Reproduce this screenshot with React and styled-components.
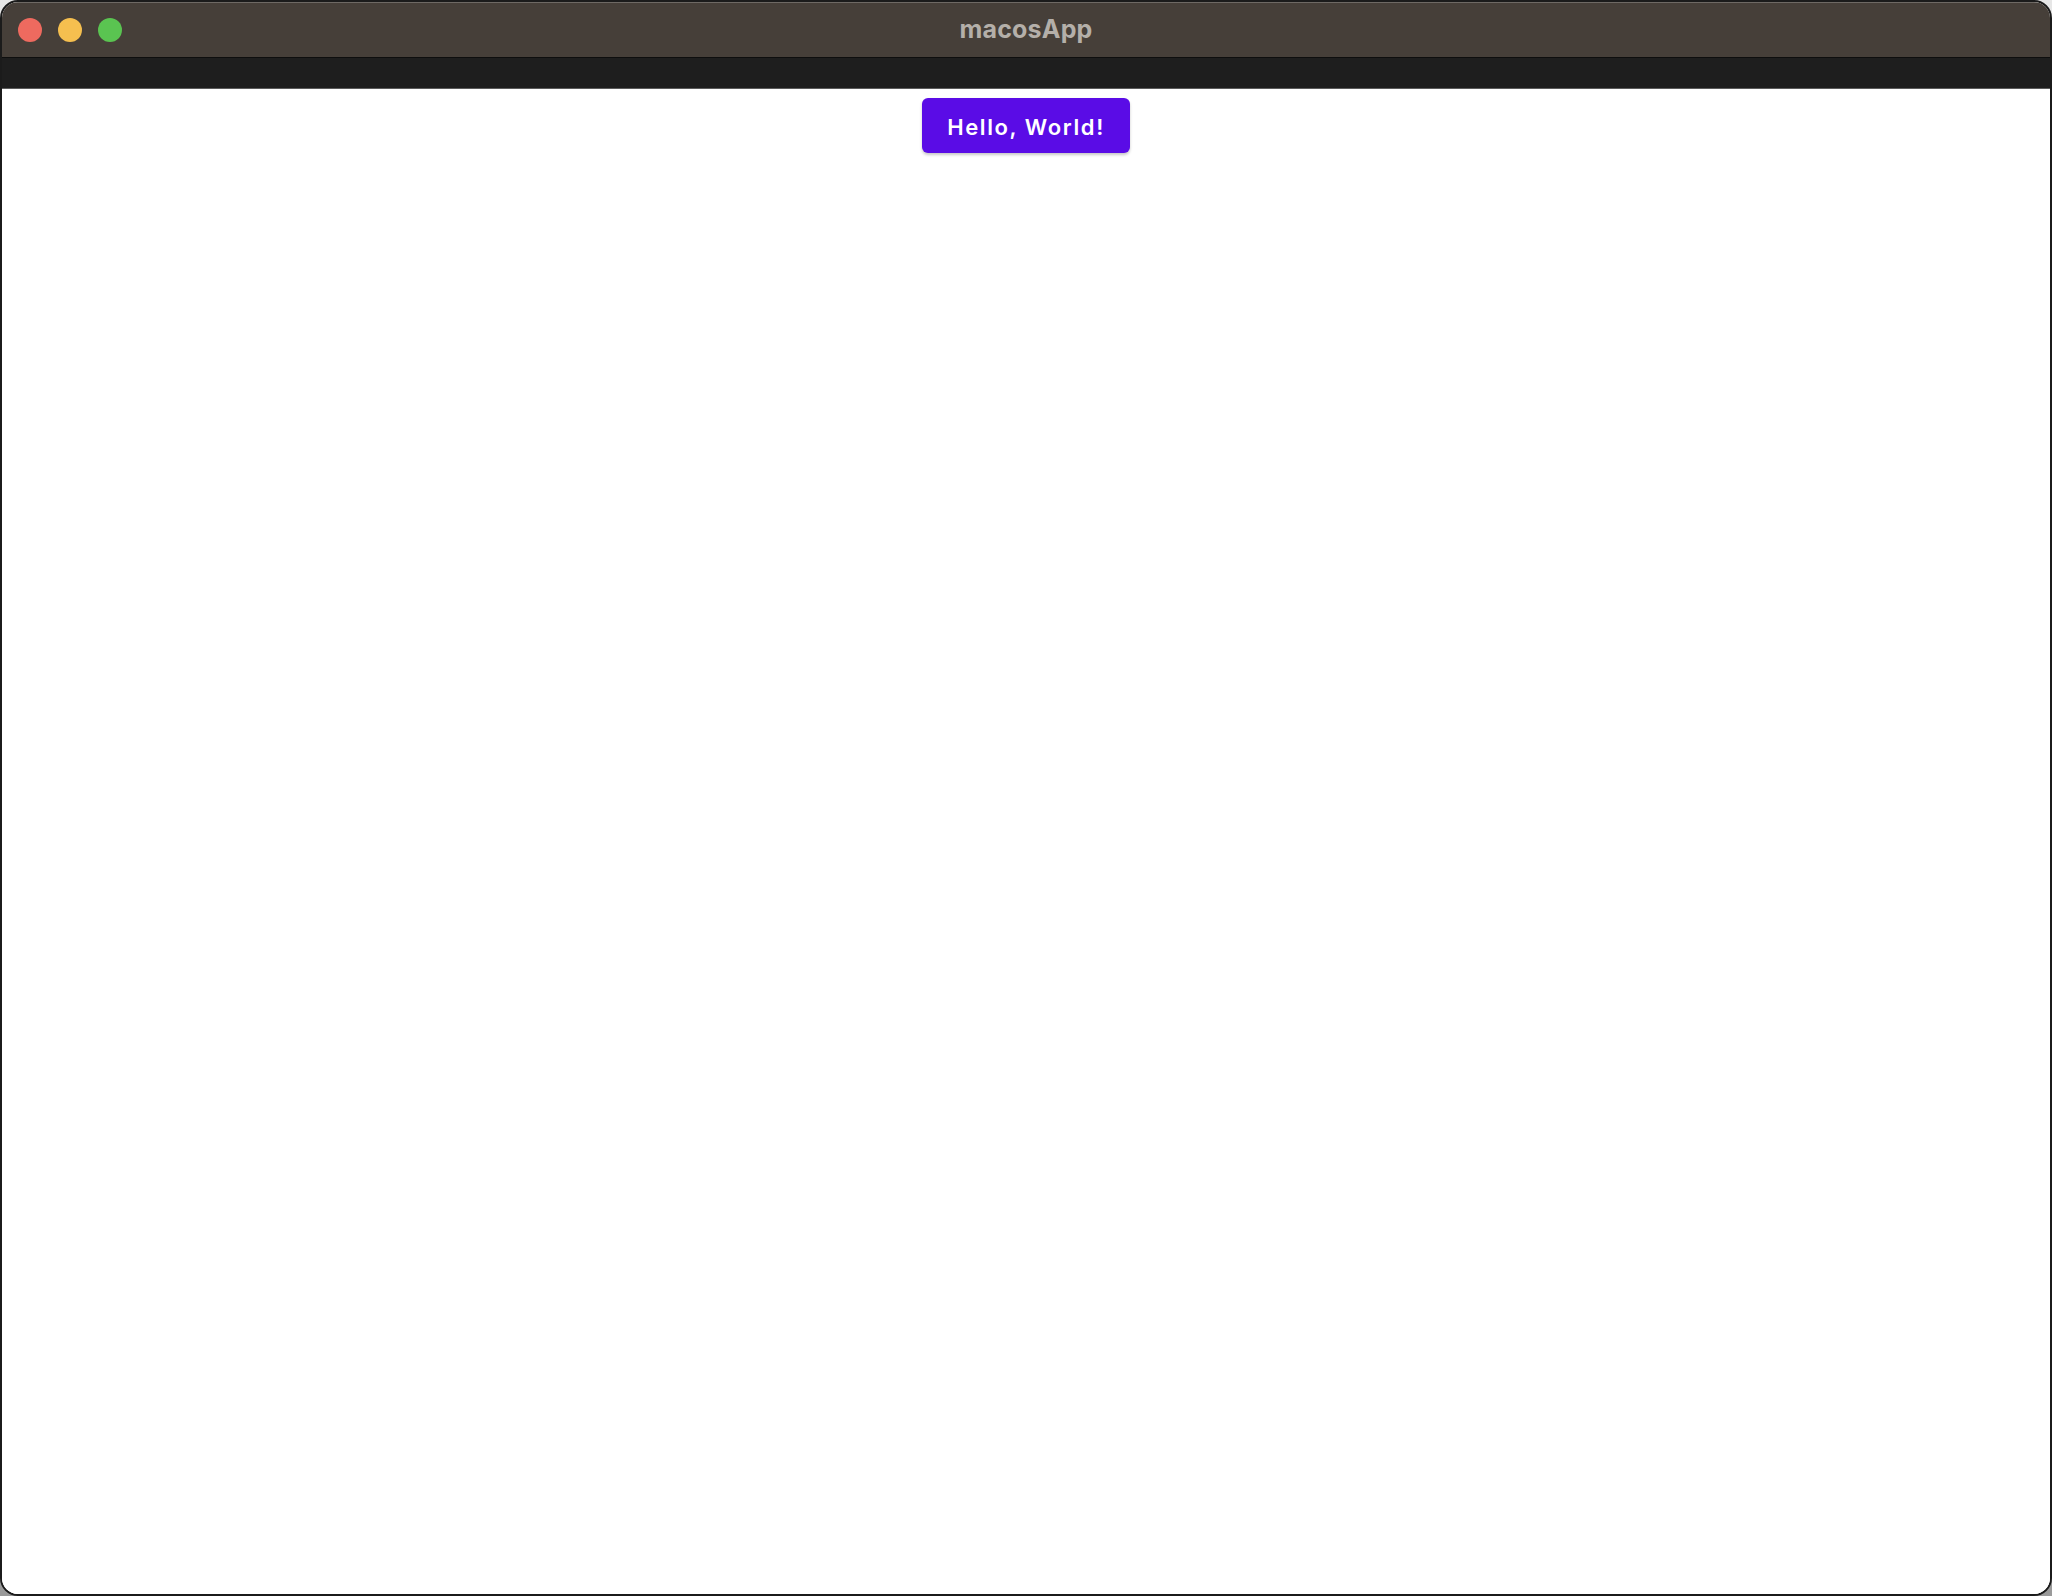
import React from "react";
import styled, { createGlobalStyle } from "styled-components";

const Global = createGlobalStyle`
  html, body {
    margin: 0;
    padding: 0;
    height: 100%;
  }
  body {
    background: linear-gradient(180deg, #e6e6e6 0%, #9a9a9a 100%);
    font-family: Inter, "Liberation Sans", sans-serif;
  }
  #root {
    height: 100%;
  }
`;

const Window = styled.div`
  box-sizing: border-box;
  height: 100vh;
  display: flex;
  flex-direction: column;
  border: 2px solid #1b1b1b;
  border-radius: 18px;
  overflow: hidden;
  background: #ffffff;
`;

const TitleBar = styled.div`
  box-sizing: border-box;
  height: 56px;
  flex: none;
  display: grid;
  grid-template-columns: 1fr auto 1fr;
  align-items: center;
  padding: 0 16px;
  background: #463f39;
  box-shadow: inset 0 1px 0 rgba(255, 255, 255, 0.22);
  border-bottom: 1px solid #0e0e0e;
`;

const Lights = styled.div`
  display: flex;
  gap: 16px;
  align-items: center;
`;

const Light = styled.span`
  width: 24px;
  height: 24px;
  border-radius: 50%;
  background: ${(p) => p.$color};
`;

const Title = styled.div`
  font-family: Inter, "Liberation Sans", sans-serif;
  font-weight: 700;
  font-size: 25px;
  color: #b4afa9;
  letter-spacing: 0.2px;
  padding-bottom: 2px;
`;

const Toolbar = styled.div`
  box-sizing: border-box;
  height: 31px;
  flex: none;
  background: #1e1e1e;
  border-bottom: 1px solid #5c5c5c;
`;

const Content = styled.div`
  flex: 1;
  display: flex;
  flex-direction: column;
  align-items: center;
  padding-top: 9px;
  background: #ffffff;
`;

const Button = styled.button`
  box-sizing: border-box;
  width: 208px;
  height: 55px;
  padding: 3px 0 0;
  border: none;
  border-radius: 6px;
  background: #5a0ce6;
  color: #ffffff;
  font-family: Inter, "Liberation Sans", sans-serif;
  font-weight: 600;
  font-size: 22px;
  letter-spacing: 1.6px;
  box-shadow: 0 2px 3px rgba(0, 0, 0, 0.22);
  cursor: pointer;
`;

export default function App() {
  return (
    <>
      <Global />
      <Window>
        <TitleBar>
          <Lights>
            <Light $color="#ee6a5f" />
            <Light $color="#f5bf4f" />
            <Light $color="#5ac451" />
          </Lights>
          <Title>macosApp</Title>
          <div />
        </TitleBar>
        <Toolbar />
        <Content>
          <Button>Hello, World!</Button>
        </Content>
      </Window>
    </>
  );
}
